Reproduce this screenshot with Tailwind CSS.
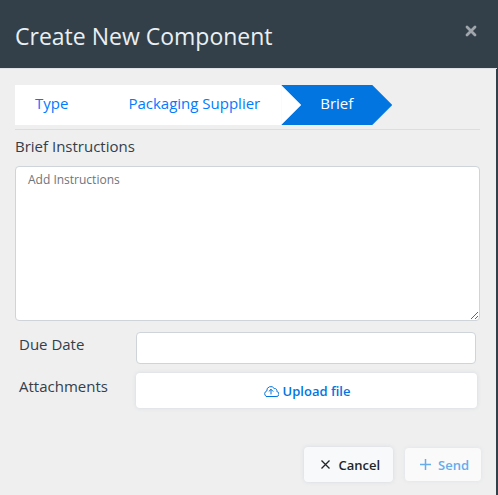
<!DOCTYPE html>
<html lang="en">
<head>
<meta charset="utf-8">
<title>Create New Component</title>
<script src="https://cdn.jsdelivr.net/npm/@tailwindcss/browser@4"></script>
</head>
<body class="min-h-screen bg-[#33404a] font-['Segoe_UI','Open_Sans',sans-serif] text-[15px] leading-6 text-[#33404a]">
<main class="mr-0.5 flex min-h-screen flex-col bg-[#efefef]">
  <header class="-mr-px flex h-[69px] items-start justify-between border-b border-[#dee2e6] bg-[#33404a] pr-5 pl-[15px]">
    <h1 class="pt-5 text-[23px] leading-8 text-[#e9eff3]">Create New Component</h1>
    <button type="button" aria-label="Close" class="mt-[25px]">
      <svg class="h-3 w-3" viewBox="0 0 12 12" fill="none" stroke="#a0a6ab" stroke-width="2.8" stroke-linecap="round"><path d="M2 2l8 8M10 2l-8 8"/></svg>
    </button>
  </header>
  <form class="flex flex-1 flex-col pt-4 pr-4 pl-[15px]">
    <nav aria-label="Steps" class="flex h-10 leading-[36px]">
      <a href="#type" class="bg-white pr-10 pl-5 text-[#007bff]">Type</a>
      <a href="#supplier" class="bg-white pr-[21px] pl-5 text-[#007bff]">Packaging Supplier</a>
      <span class="bg-white [clip-path:polygon(0_0,calc(100%_-_20px)_0,100%_50%,calc(100%_-_20px)_100%,0_100%)]"><a href="#brief" aria-current="step" class="block h-10 bg-[#0275e0] px-[39px] text-white [clip-path:polygon(0_0,100%_0,100%_100%,0_100%,20px_50%)]">Brief</a></span>
    </nav>
    <hr class="mt-1 border-[#dcdddd]">
    <label for="brief" class="mt-1">Brief Instructions</label>
    <textarea id="brief" placeholder="Add Instructions" class="mt-2 h-[155px] w-full rounded-[4px] border border-[#ced4da] bg-white px-3 py-1 text-xs leading-[18px] placeholder:text-[#6c757d]"></textarea>
    <div class="mt-[11px] grid grid-cols-[117px_1fr] gap-y-[9px] px-1">
      <label for="due">Due Date</label>
      <input id="due" type="text" class="h-8 w-full rounded-[4px] border border-[#ced4da] bg-white px-3 text-xs">
      <label for="upload" class="pt-px">Attachments</label>
      <button id="upload" type="button" class="-mr-px flex h-[35px] items-center justify-center gap-1 rounded-[4px] bg-white text-[13px] font-semibold text-[#0275e0] shadow-[0_0_4px_#d5d9e0]">
        <svg class="h-4 w-4" viewBox="0 0 16 16" fill="none" stroke="currentColor" stroke-linecap="round" stroke-linejoin="round"><path d="M3.500 13.500h9.500a2.500 2.500 0 0 0 .8-5 2.300 2.300 0 0 0-2.600-3 4 4 0 0 0-7.400 2.500A2.900 2.900 0 0 0 3.500 13.500zM8 11V6.500M6 8.300l2-2 2 2"/></svg>
        Upload file
      </button>
    </div>
    <footer class="mt-auto flex items-center justify-end gap-3 pb-[13px]">
      <button type="button" class="flex h-[35px] items-center gap-[7px] rounded-[4px] bg-[#f8f9fb] pr-[13px] pl-4 text-[13px] font-semibold text-[#212529] shadow-[0_0_4px_#d5d9e0]">
        <svg class="h-[11px] w-[11px]" viewBox="0 0 11 11" fill="none" stroke="currentColor" stroke-width="1.300"><path d="M1.500 1.500l8 8M9.500 1.500l-8 8"/></svg>
        Cancel
      </button>
      <button type="button" disabled class="-mr-px flex h-[33px] items-center gap-[7px] rounded-[4px] bg-[#fafafa] pr-3 pl-[15px] text-[13px] font-semibold text-[#67aceb] shadow-[0_0_4px_#e0e3e8]">
        <svg class="h-[11px] w-[11px]" viewBox="0 0 11 11" fill="none" stroke="currentColor" stroke-width="1.500"><path d="M5.500 0v11M0 5.500h11"/></svg>
        Send
      </button>
    </footer>
  </form>
</main>
</body>
</html>
